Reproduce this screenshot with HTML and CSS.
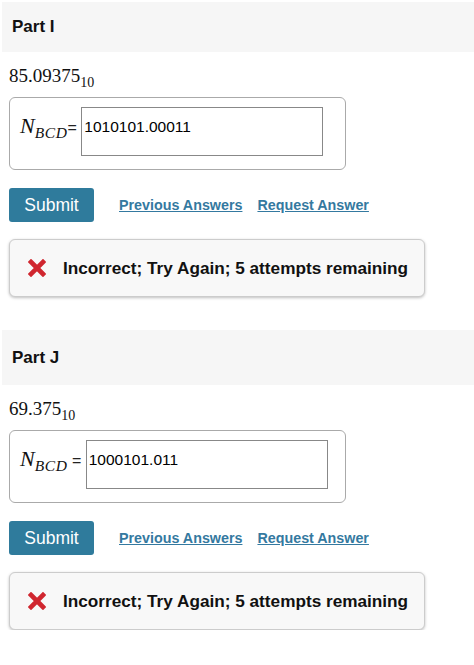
FILE: index.html
```html
<!DOCTYPE html>
<html lang="en">

<head>
    <meta charset="UTF-8">
    <meta name="viewport" content="width=device-width, initial-scale=1.0">
    <title>Parts</title>
    <link rel="stylesheet" href="styles.css">
</head>

<body>
    <div class="part">
        <div class="partHead"><h3>Part I</h3></div>
        <div class="partBody">
            <p class="question"><span class="num">85.09375</span><sub>10</sub></p>
            <div class="answerBox">
                <span class="label"><i>N</i><sub><i>BCD</i></sub><span class="eq">= </span></span>
                <input type="text" class="answer" value="1010101.00011">
            </div>
            <div class="actions">
                <button class="submit">Submit</button>
                <a href="#" class="link">Previous Answers</a>
                <a href="#" class="link">Request Answer</a>
            </div>
            <div class="feedback">
                <svg class="cross" width="18" height="18" viewBox="0 0 18 18"><path d="M3 3 L15 15 M15 3 L3 15" stroke="#d0262f" stroke-width="4.6" stroke-linecap="square"/></svg>
                <span>Incorrect; Try Again; 5 attempts remaining</span>
            </div>
        </div>
    </div>

    <div class="part second">
        <div class="partHead"><h3>Part J</h3></div>
        <div class="partBody">
            <p class="question"><span class="num">69.375</span><sub>10</sub></p>
            <div class="answerBox">
                <span class="label"><i>N</i><sub><i>BCD</i></sub><span class="eq"> = </span></span>
                <input type="text" class="answer" value="1000101.011">
            </div>
            <div class="actions">
                <button class="submit">Submit</button>
                <a href="#" class="link">Previous Answers</a>
                <a href="#" class="link">Request Answer</a>
            </div>
            <div class="feedback">
                <svg class="cross" width="18" height="18" viewBox="0 0 18 18"><path d="M3 3 L15 15 M15 3 L3 15" stroke="#d0262f" stroke-width="4.6" stroke-linecap="square"/></svg>
                <span>Incorrect; Try Again; 5 attempts remaining</span>
            </div>
        </div>
    </div>
</body>

</html>
```

FILE: styles.css
```css
*{margin: 0px;padding: 0px;box-sizing: border-box;font-family: "Liberation Sans", Arial, sans-serif;color: #111;}
body{background: white;padding-top: 2px;}
.part{margin-left: 2px;}
.second{margin-top: 33px;}
.partHead{background-color: #f6f6f6;height: 50px;display: flex;align-items: center;padding-left: 10px;}
.second .partHead{height: 55px;}
.partHead h3{font-size: 17px;font-weight: bold;}
.partBody{padding-left: 7px;}
.question{font-family: "Liberation Serif", serif;font-size: 19px;margin-top: 13px;height: 22px;line-height: 22px;}
.question .num{font-family: "Liberation Serif", serif;}
.question sub{font-family: "Liberation Serif", serif;font-size: 14px;vertical-align: -5px;line-height: 0;}
.answerBox{margin-top: 10px;width: 337px;height: 73px;border: 1px solid #aaa;border-radius: 6px;padding: 9px 10px 9px 10px;display: flex;align-items: flex-start;}
.label{font-family: "Liberation Serif", serif;font-size: 22px;margin-top: 6px;white-space: pre;}
.label i{font-family: "Liberation Serif", serif;}
.label sub{font-size: 15px;vertical-align: -5px;line-height: 0;letter-spacing: 0.6px;}
.label sub i{font-size: 15.5px;}
.eq{font-family: "Liberation Sans", Arial, sans-serif;font-size: 16px;color: #222;}
.answer{width: 242px;height: 49px;border: 1px solid #888;font-size: 15.5px;padding: 0px 2px 10px;color: black;outline: none;}
.actions{display: flex;align-items: center;margin-top: 18px;}
.submit{background-color: #2f7b9c;color: white;border: none;border-radius: 3px;width: 85px;height: 34px;font-size: 17.5px;}
.link{color: #3479a0;font-weight: bold;font-size: 14.3px;margin-left: 25px;text-decoration: underline;}
.link + .link{margin-left: 15px;}
.feedback{margin-top: 17px;width: 416px;height: 58px;background-color: #f8f8f8;border: 1px solid #ccc;border-radius: 6px;box-shadow: 0px 1px 3px rgba(0,0,0,0.25);display: flex;align-items: center;padding-left: 18px;}
.feedback span{font-weight: bold;font-size: 17.2px;margin-left: 17px;}
.cross{flex-shrink: 0;}
```
